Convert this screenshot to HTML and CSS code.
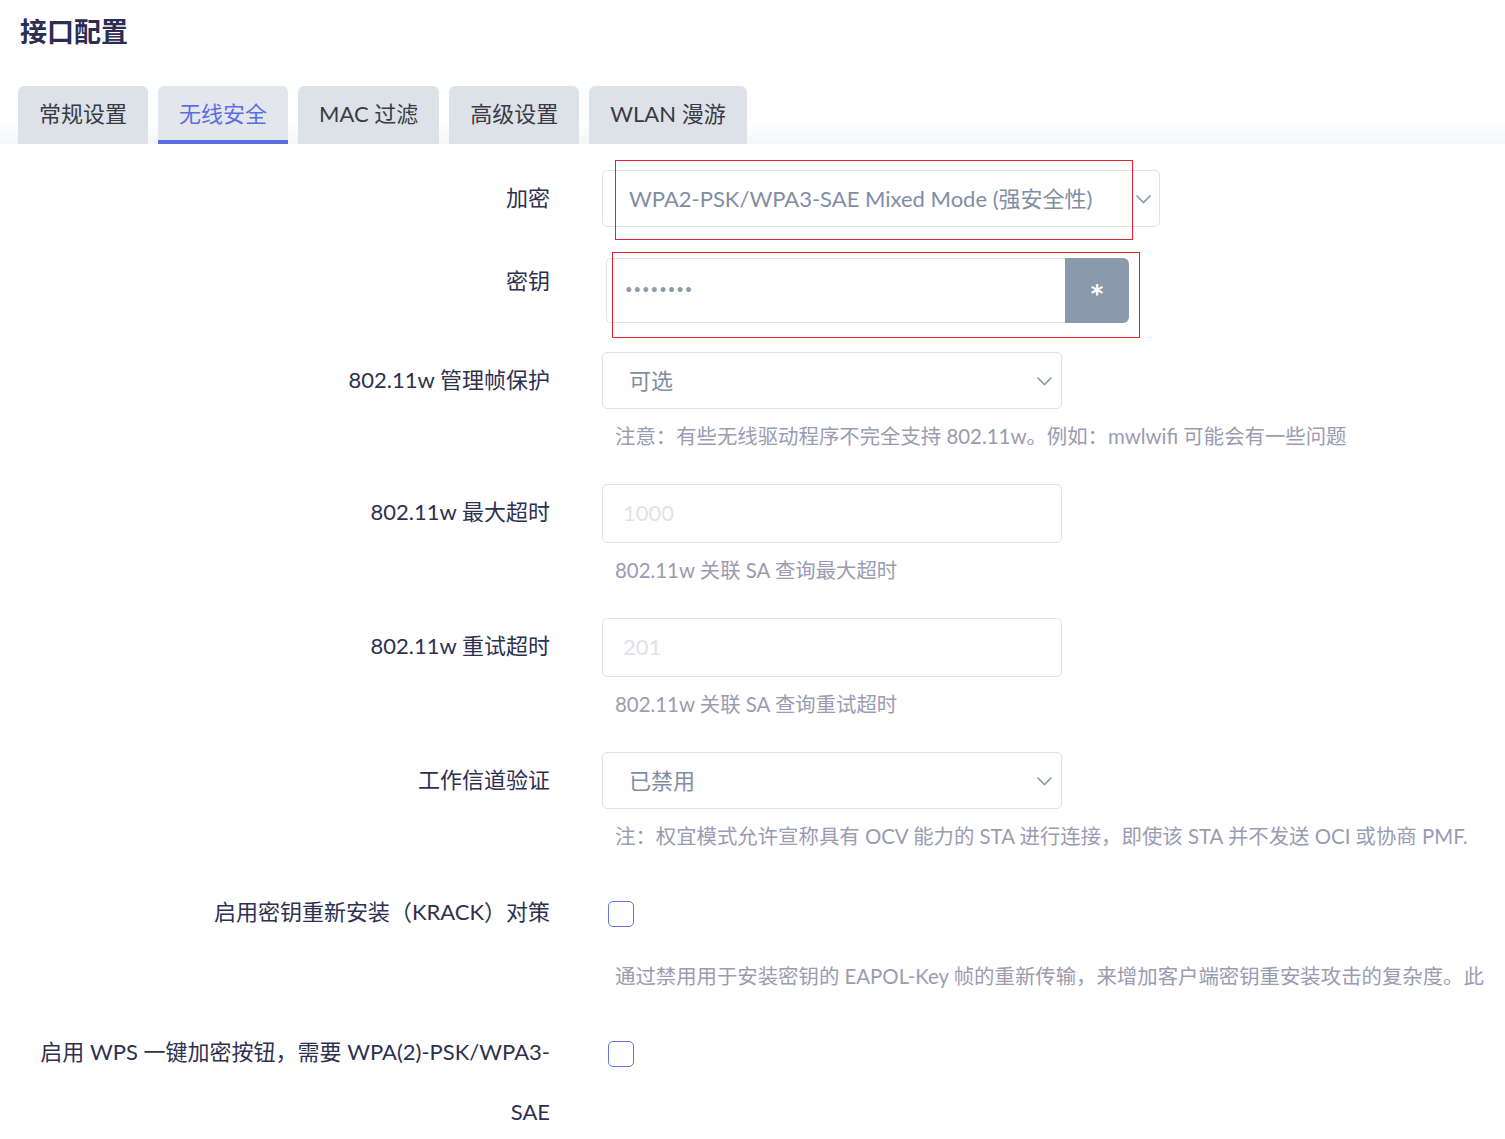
FILE: index.html
```html
<!DOCTYPE html>
<html lang="zh-CN">
<head>
    <meta charset="UTF-8">
    <meta name="viewport" content="width=device-width, initial-scale=1.0">
    <title>接口配置</title>
    <link rel="stylesheet" href="styles.css">
</head>
<body>
    <h2 class="page-title">接口配置</h2>

    <div class="tab-bar">
        <div class="tab">常规设置</div>
        <div class="tab active">无线安全</div>
        <div class="tab">MAC 过滤</div>
        <div class="tab">高级设置</div>
        <div class="tab">WLAN 漫游</div>
    </div>

    <div class="panel">
        <div class="row">
            <label class="row-label">加密</label>
            <div class="field">
                <div class="select select-wide">
                    <span>WPA2-PSK/WPA3-SAE Mixed Mode (强安全性)</span>
                    <svg class="chevron" viewBox="0 0 16 10"><path d="M1 1.5l7 7 7-7"/></svg>
                </div>
                <div class="mark mark-enc"></div>
            </div>
        </div>

        <div class="row row-key">
            <label class="row-label label-key">密钥</label>
            <div class="field">
                <div class="key-group">
                    <div class="key-input"><span class="dots">••••••••</span></div>
                    <button class="key-toggle">*</button>
                </div>
                <div class="mark mark-key"></div>
            </div>
        </div>

        <div class="row">
            <label class="row-label">802.11w 管理帧保护</label>
            <div class="field">
                <div class="select">
                    <span>可选</span>
                    <svg class="chevron" viewBox="0 0 16 10"><path d="M1 1.5l7 7 7-7"/></svg>
                </div>
                <div class="help">注意：有些无线驱动程序不完全支持 802.11w。例如：mwlwifi 可能会有一些问题</div>
            </div>
        </div>

        <div class="row">
            <label class="row-label">802.11w 最大超时</label>
            <div class="field">
                <div class="text-input"><span class="placeholder">1000</span></div>
                <div class="help">802.11w 关联 SA 查询最大超时</div>
            </div>
        </div>

        <div class="row">
            <label class="row-label">802.11w 重试超时</label>
            <div class="field">
                <div class="text-input"><span class="placeholder">201</span></div>
                <div class="help">802.11w 关联 SA 查询重试超时</div>
            </div>
        </div>

        <div class="row">
            <label class="row-label">工作信道验证</label>
            <div class="field">
                <div class="select">
                    <span>已禁用</span>
                    <svg class="chevron" viewBox="0 0 16 10"><path d="M1 1.5l7 7 7-7"/></svg>
                </div>
                <div class="help">注：权宜模式允许宣称具有 OCV 能力的 STA 进行连接，即使该 STA 并不发送 OCI 或协商 PMF.</div>
            </div>
        </div>

        <div class="row">
            <label class="row-label">启用密钥重新安装（KRACK）对策</label>
            <div class="field">
                <div class="check-wrap"><span class="checkbox"></span></div>
                <div class="help help-check">通过禁用用于安装密钥的 EAPOL-Key 帧的重新传输，来增加客户端密钥重安装攻击的复杂度。此</div>
            </div>
        </div>

        <div class="row">
            <label class="row-label">启用 WPS 一键加密按钮，需要 WPA(2)-PSK/WPA3-SAE</label>
            <div class="field">
                <div class="check-wrap"><span class="checkbox"></span></div>
            </div>
        </div>
    </div>
</body>
</html>
```

FILE: styles.css
```css
:root {
    --primary: #5b6ee1;
    --text: #2e3050;
    --muted: #9b9bb2;
    --value: #7f8ea3;
    --border: #dfe2e8;
    --tab-bg: #dde2e8;
}

* {
    margin: 0;
    padding: 0;
    box-sizing: border-box;
}

body {
    font-family: Lato, "Noto Sans CJK SC", sans-serif;
    background: #ffffff;
    color: var(--text);
    overflow: hidden;
}

.page-title {
    font-size: 27px;
    font-weight: 700;
    line-height: 64px;
    padding: 0 20px;
    color: #2c2d52;
}

/* Tabs */
.tab-bar {
    display: flex;
    gap: 10px;
    padding: 22px 18px 0;
    background: linear-gradient(#ffffff 70%, #f5f6f8);
}

.tab {
    height: 58px;
    padding: 0 21px;
    line-height: 56px;
    font-size: 22px;
    color: #383a44;
    background: var(--tab-bg);
    border-radius: 6px 6px 0 0;
}

.tab.active {
    color: var(--primary);
    background: #e3e7ec;
    border-bottom: 4px solid var(--primary);
}

/* Form */
.panel {
    padding-top: 26px;
}

.row {
    display: grid;
    grid-template-columns: 550px 1fr;
    column-gap: 52px;
    margin-bottom: 30px;
}

.row-key {
    margin-bottom: 29px;
}

.row-label {
    padding-left: 40px;
    text-align: right;
    font-size: 22px;
    line-height: 60px;
    margin-top: -2px;
    color: var(--text);
}

.label-key {
    line-height: 50px;
}

.field {
    position: relative;
    min-width: 0;
}

.select, .text-input, .key-input {
    display: flex;
    align-items: center;
    height: 57px;
    width: 460px;
    padding: 0 8px 3px 26px;
    border: 1px solid var(--border);
    border-radius: 5px;
    font-size: 22px;
    color: var(--value);
    background: #fff;
}

.select span {
    flex: 1;
    white-space: nowrap;
}

.select .chevron {
    margin-top: 3px;
}

.select-wide {
    width: 558px;
    padding-right: 7px;
}

.chevron {
    width: 17px;
    height: 10px;
    fill: none;
    stroke: #8d96a8;
    stroke-width: 1.6;
}

.text-input {
    height: 59px;
    padding-left: 20px;
}

.placeholder {
    color: #dfe3ea;
}

.key-group {
    display: flex;
    margin-left: 4px;
    height: 65px;
    width: 523px;
}

.key-input {
    flex: 1;
    height: 65px;
    width: auto;
    padding-left: 18px;
    border-radius: 5px 0 0 5px;
    border-right: none;
}

.dots {
    font-size: 13px;
    letter-spacing: 1px;
    color: #8f9aab;
}

.key-toggle {
    width: 64px;
    border: none;
    border-radius: 0 6px 6px 0;
    background: #8a99ac;
    color: #ffffff;
    font-size: 24px;
    font-weight: 700;
    font-family: "DejaVu Sans", sans-serif;
    padding-top: 6px;
}

.help {
    margin-top: 12px;
    margin-bottom: 3px;
    padding-left: 13px;
    font-size: 20.4px;
    line-height: 30px;
    color: var(--muted);
    white-space: nowrap;
}

.help-check {
    margin-top: 17px;
}

.check-wrap {
    height: 60px;
    display: flex;
    align-items: center;
    padding-left: 6px;
}

.checkbox {
    width: 26px;
    height: 26px;
    border: 1.5px solid #6476e0;
    border-radius: 5px;
    background: #fff;
}

/* annotation boxes over the fields */
.mark {
    position: absolute;
    border: 1.5px solid #e8202a;
    pointer-events: none;
}

.mark-enc {
    left: 13px;
    top: -10px;
    width: 518px;
    height: 80px;
}

.mark-key {
    left: 10px;
    top: -6px;
    width: 528px;
    height: 86px;
}
```
